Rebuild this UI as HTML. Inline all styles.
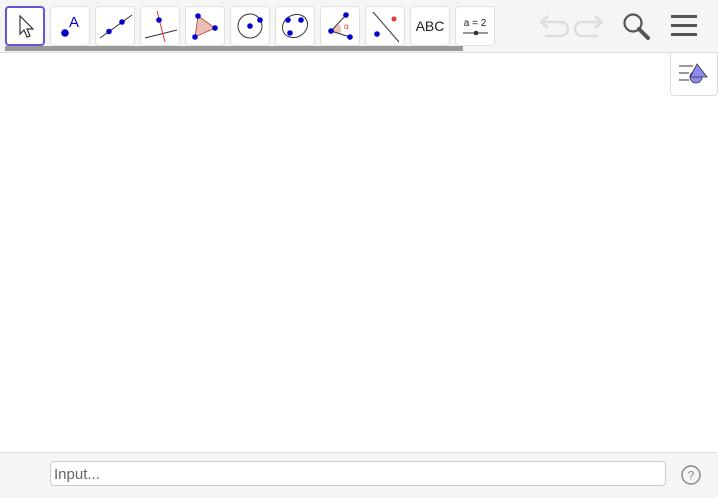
<!DOCTYPE html>
<html><head><style>
body{margin:0;width:718px;height:497px;position:relative;background:#fff;font-family:"Liberation Sans",sans-serif;overflow:hidden}
.tb{position:absolute;left:0;top:0;width:718px;height:52px;background:#f5f5f5;border-bottom:1px solid #ddd}
.b{position:absolute;top:6px;width:38px;height:38px;background:#fff;border:1px solid #e0e0e0;border-radius:4px}
.b svg{position:absolute;left:0;top:0}
.sel{border:2px solid #6557d2;width:36px;height:36px}
.sb{position:absolute;left:5px;top:46px;width:458px;height:5px;background:#999}
.bot{position:absolute;left:0;top:452px;width:718px;height:45px;background:#f5f5f5;border-top:1px solid #ddd}
.inp{position:absolute;left:50px;top:8px;height:25px;background:#fff;border:1px solid #ccc;border-radius:4px;font-size:15px;color:#666;line-height:25px;padding-left:3px;box-sizing:border-box;width:616px}
</style></head><body>
<div class="tb">
<div class="b sel" style="left:5px"><svg width="36" height="36"><path d="M13 8 L13 26 L17 22 L20 29 L23 28 L20 21 L26 21 Z" fill="#fff" stroke="#333" stroke-width="1.2"/></svg></div>
<div class="b" style="left:50px"><svg width="38" height="38"><circle cx="14" cy="26" r="3.8" fill="#00c"/><text x="18" y="20" font-size="15" fill="#00c" font-family="Liberation Sans">A</text></svg></div>
<div class="b" style="left:95px"><svg width="38" height="38"><line x1="4" y1="31" x2="36" y2="8" stroke="#333"/><circle cx="13" cy="24.5" r="2.8" fill="#00c"/><circle cx="26" cy="15" r="2.8" fill="#00c"/></svg></div>
<div class="b" style="left:140px"><svg width="38" height="38"><line x1="4" y1="31" x2="36" y2="23" stroke="#333"/><line x1="16" y1="4" x2="24" y2="35" stroke="#e33"/><circle cx="18" cy="13" r="2.8" fill="#00c"/></svg></div>
<div class="b" style="left:185px"><svg width="38" height="38"><path d="M12 9 L29 21 L9 30 Z" fill="#e8c0b5" stroke="#c33" stroke-width="0.8"/><circle cx="12" cy="9" r="2.8" fill="#00c"/><circle cx="29" cy="21" r="2.8" fill="#00c"/><circle cx="9" cy="30" r="2.8" fill="#00c"/></svg></div>
<div class="b" style="left:230px"><svg width="38" height="38"><circle cx="19" cy="19" r="12" fill="none" stroke="#333"/><circle cx="19" cy="19" r="2.8" fill="#00c"/><circle cx="29" cy="13" r="2.8" fill="#00c"/></svg></div>
<div class="b" style="left:275px"><svg width="38" height="38"><ellipse cx="19" cy="19" rx="13" ry="11" transform="rotate(-30 19 19)" fill="none" stroke="#333"/><circle cx="12" cy="13" r="2.8" fill="#00c"/><circle cx="25" cy="13" r="2.8" fill="#00c"/><circle cx="14" cy="26" r="2.8" fill="#00c"/></svg></div>
<div class="b" style="left:320px"><svg width="38" height="38"><path d="M10 24 L18 17 A10 10 0 0 1 19 27 Z" fill="#e8c0b5"/><line x1="10" y1="24" x2="25" y2="8" stroke="#333"/><line x1="10" y1="24" x2="29" y2="30" stroke="#333"/><circle cx="10" cy="24" r="2.8" fill="#00c"/><circle cx="25" cy="8" r="2.8" fill="#00c"/><circle cx="29" cy="30" r="2.8" fill="#00c"/><text x="23" y="22" font-size="8" fill="#e33">α</text></svg></div>
<div class="b" style="left:365px"><svg width="38" height="38"><line x1="7" y1="5" x2="33" y2="35" stroke="#333"/><circle cx="28" cy="12" r="2.5" fill="#e33"/><circle cx="11" cy="27" r="2.8" fill="#00c"/></svg></div>
<div class="b" style="left:410px"><svg width="38" height="38"><text x="19" y="24" font-size="14" text-anchor="middle" fill="#222" font-family="Liberation Sans">ABC</text></svg></div>
<div class="b" style="left:455px"><svg width="38" height="38"><text x="19" y="19" font-size="10" text-anchor="middle" fill="#222" font-family="Liberation Sans">a = 2</text><line x1="7" y1="26" x2="32" y2="26" stroke="#333"/><circle cx="20" cy="26" r="2.3" fill="#333"/></svg></div>
<svg style="position:absolute;left:535px;top:10px" width="70" height="32"><path d="M9 12 L26 12 A7 7 0 0 1 26 26 L10 26" fill="none" stroke="#ddd" stroke-width="2.5"/><path d="M6 12 L13 6 M6 12 L13 18" stroke="#ddd" stroke-width="2.5"/><path d="M64 12 L47 12 A7 7 0 0 0 47 26 L63 26" fill="none" stroke="#ddd" stroke-width="2.5"/><path d="M67 12 L60 6 M67 12 L60 18" stroke="#ddd" stroke-width="2.5"/></svg>
<svg style="position:absolute;left:620px;top:10px" width="34" height="32"><circle cx="13" cy="13" r="8.5" fill="none" stroke="#555" stroke-width="2.2"/><line x1="19" y1="19" x2="28" y2="28" stroke="#555" stroke-width="4" stroke-linecap="round"/></svg>
<svg style="position:absolute;left:668px;top:12px" width="32" height="28"><rect x="3" y="3" width="26" height="3" fill="#555"/><rect x="3" y="12" width="26" height="3" fill="#555"/><rect x="3" y="21" width="26" height="3" fill="#555"/></svg>
<div class="sb"></div>
</div>
<div style="position:absolute;left:670px;top:53px;width:46px;height:42px;background:#fff;border:1px solid #ddd;border-top:none;border-radius:0 0 4px 4px"></div>
<svg style="position:absolute;left:676px;top:60px" width="36" height="30"><rect x="3" y="5" width="14" height="2" fill="#999"/><rect x="3" y="12" width="10" height="2" fill="#999"/><rect x="3" y="19" width="10" height="2" fill="#999"/><circle cx="20" cy="17" r="6" fill="#8c8cf0" stroke="#333" stroke-width="0.8"/><path d="M21 4 L31 17 L14 17 Z" fill="#8c8cf0" stroke="#333" stroke-width="0.8"/></svg>
<div class="bot"><div class="inp">Input...</div>
<svg style="position:absolute;left:680px;top:11px" width="22" height="22"><circle cx="11" cy="11" r="9" fill="none" stroke="#888" stroke-width="1.5"/><text x="11" y="15.5" font-size="12" text-anchor="middle" fill="#888" font-family="Liberation Sans">?</text></svg>
</div>
</body></html>
